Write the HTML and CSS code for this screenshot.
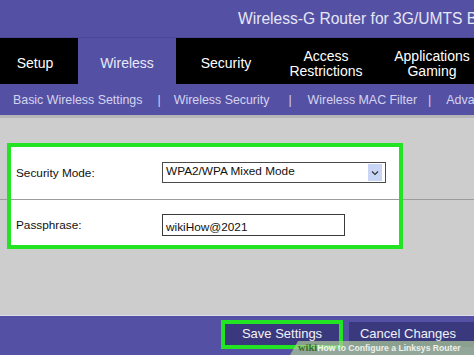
FILE: index.html
```html
<!DOCTYPE html>
<html lang="en">
<head>
  <meta charset="UTF-8" />
  <meta name="viewport" content="width=device-width, initial-scale=1.0"/>
  <title>Wireless Security</title>
  <link rel="stylesheet" href="styles.css">
</head>
<body>
  <div class="topbar">Wireless-G Router for 3G/UMTS Broadband</div>

  <div class="tabs">
    <div class="tab tab-setup">Setup</div>
    <div class="tab tab-wireless active">Wireless</div>
    <div class="tab tab-security">Security</div>
    <div class="tab tab-access">Access<br>Restrictions</div>
    <div class="tab tab-apps">Applications<br>Gaming</div>
  </div>

  <div class="subnav">
    <span>Basic Wireless Settings</span>
    <span class="sep">|</span>
    <span>Wireless Security</span>
    <span class="sep sep2">|</span>
    <span>Wireless MAC Filter</span>
    <span class="sep sep3">|</span>
    <span>Advanced Wireless Settings</span>
  </div>

  <div class="content">
    <div class="highlight">
      <div class="row row-mode">
        <div class="label">Security Mode:</div>
        <div class="select">
          <span>WPA2/WPA Mixed Mode</span>
          <span class="arrow">
            <svg width="8" height="6" viewBox="0 0 8 6"><path d="M1 1.5 L4 4.5 L7 1.5" fill="none" stroke="#333" stroke-width="1.2"/></svg>
          </span>
        </div>
      </div>
      <div class="row row-pass">
        <div class="label">Passphrase:</div>
        <div class="textbox">wikiHow@2021</div>
      </div>
    </div>
  </div>

  <div class="footer">
    <button class="btn btn-save">Save Settings</button>
    <button class="btn btn-cancel">Cancel Changes</button>
  </div>

  <!-- watermark -->
  <div class="watermark"><b class="wm-wiki">wiki</b><b class="wm-how">How</b> to Configure a Linksys Router</div>
</body>
</html>
```

FILE: styles.css
```css
body {
  margin: 0;
  width: 474px;
  height: 355px;
  overflow: hidden;
  position: relative;
  font-family: "Liberation Sans", Arial, sans-serif;
  background: #cdcdcd;
}
.topbar {
  height: 37px;
  line-height: 37px;
  padding-left: 238px;
  background: #5451a5;
  border-bottom: 1px solid #4a4796;
  color: #e6e6f4;
  font-size: 15.6px;
  white-space: nowrap;
  overflow: hidden;
}
.tabs {
  display: flex;
  height: 46px;
  background: #000;
  color: #fff;
  font-size: 14px;
}
.tab {
  display: flex;
  align-items: center;
  justify-content: center;
  text-align: center;
  line-height: 15px;
  flex-shrink: 0;
  padding-top: 4px;
  box-sizing: border-box;
}
.tab-setup { width: 78px; padding-right: 8px; }
.tab-wireless { width: 98px; }
.tab-security { width: 100px; }
.tab-access { width: 100px; padding-top: 6px; }
.tab-apps { width: 112px; padding-top: 6px; }
.tab.active {
  background: #5451a5;
  color: #e8e8f6;
}
.subnav {
  display: flex;
  align-items: center;
  height: 31px;
  padding-left: 13px;
  background: #5451a5;
  color: #d4d4ee;
  font-size: 12.4px;
  white-space: nowrap;
  overflow: hidden;
}
.sep { margin: 0 13px 0 15px; }
.sep2 { margin: 0 16px 0 19px; }
.sep3 { margin: 0 15px 0 11px; }
.content {
  height: 200px;
  border-top: 3px solid #b6b6b6;
  padding: 25px 0 0 7px;
  box-sizing: border-box;
  background: linear-gradient(to bottom, #cdcdcd 81px, #9c9c9c 81px, #9c9c9c 82px, #cdcdcd 82px);
}
.highlight {
  width: 388px;
  border: 4px solid #22e422;
  background: #fff;
}
.row {
  display: grid;
  grid-template-columns: 151px 1fr;
  align-items: center;
  font-size: 11.8px;
  color: #111;
}
.row-mode {
  height: 52px;
  border-bottom: 1px solid #9c9c9c;
}
.row-pass {
  height: 45px;
  padding-top: 4px;
  box-sizing: border-box;
}
.label {
  padding-left: 5px;
}
.select {
  width: 224px;
  height: 21px;
  box-sizing: border-box;
  border: 1px solid #4a4a4a;
  display: flex;
  align-items: center;
  justify-content: space-between;
  padding: 0 3px 0 3px;
  margin-top: -1px;
}
.select span:first-child { margin-top: -4px; }
.arrow {
  width: 14px;
  height: 17px;
  background: #c8d5f4;
  display: flex;
  align-items: center;
  justify-content: center;
}
.textbox {
  width: 183px;
  height: 22px;
  box-sizing: border-box;
  border: 1px solid #3a3a3a;
  padding: 5px 0 0 3px;
}
.footer {
  display: flex;
  align-items: flex-start;
  height: 40px;
  box-sizing: border-box;
  padding: 4px 0 0 221px;
  border-top: 1px solid #dcdcec;
  background: #5451a5;
}
.btn {
  flex-shrink: 0;
  font-family: "Liberation Sans", Arial, sans-serif;
  font-size: 13px;
  color: #f2f2f8;
  background: #3a397d;
  border: none;
  padding: 0;
  margin: 0;
}
.btn-save {
  width: 122px;
  height: 29px;
  border: 4px solid #22e422;
  padding-bottom: 2px;
}
.btn-cancel {
  width: 130px;
  height: 25px;
  margin: 2px 0 0 6px;
  padding: 0 12px 2px 0;
}
.watermark {
  position: absolute;
  right: 0;
  bottom: 0;
  width: 184px;
  height: 14px;
  line-height: 14px;
  padding-left: 8px;
  box-sizing: border-box;
  background: rgba(170, 200, 150, 0.72);
  clip-path: polygon(8px 0, 100% 0, 100% 100%, 0 100%);
  color: #eef0ea;
  font-size: 8.6px;
  font-weight: bold;
  white-space: nowrap;
}
.wm-wiki {
  font-family: "Liberation Serif", serif;
  font-size: 10.5px;
  color: #3d6a2c;
}
.wm-how { color: #f6f8f2; }
```
